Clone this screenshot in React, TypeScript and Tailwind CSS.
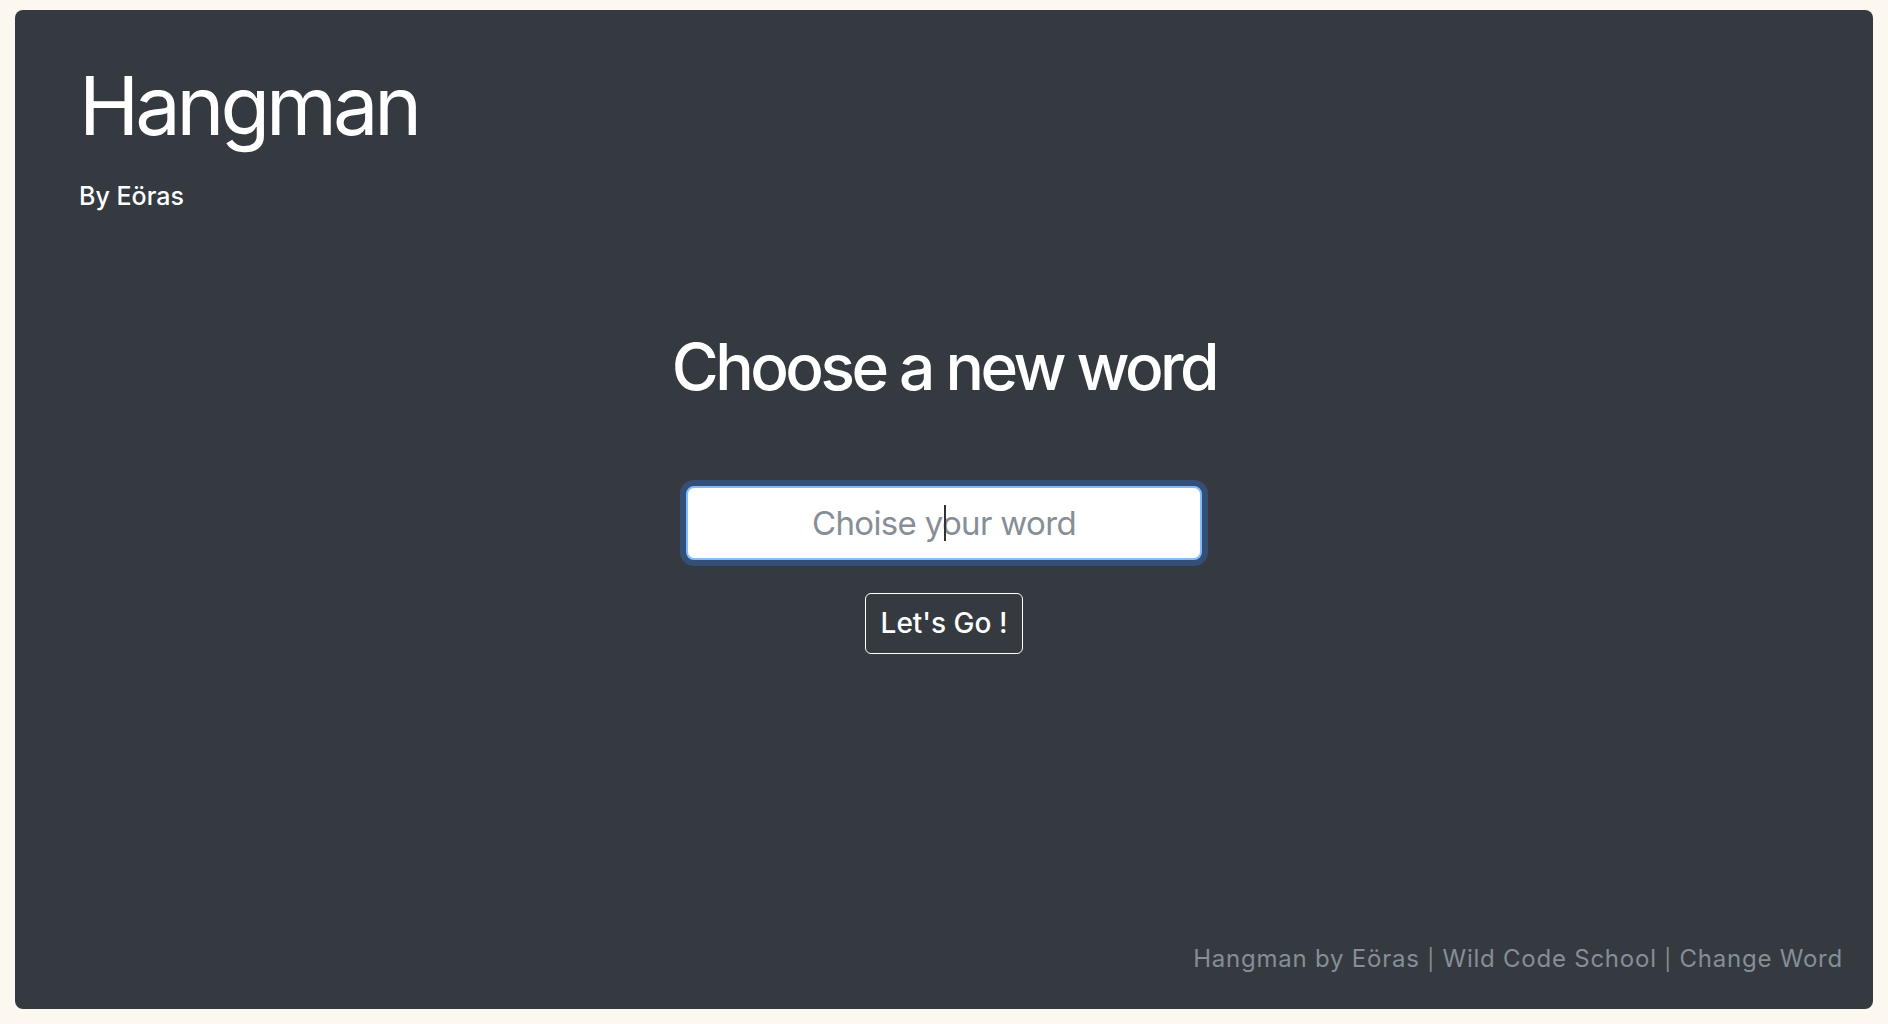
import React from "react";

export default function App() {
  return (
    <div
      className="min-h-screen bg-[#fdf8ef] pt-[10px] px-[15px] pb-[15px]"
      style={{ fontFamily: "Inter, 'Noto Sans', 'Liberation Sans', sans-serif" }}
    >
      <div className="flex h-[999px] flex-col rounded-[8px] bg-[#343a40] text-white">
        <header className="pl-[64px] pt-[48px]">
          <h1 className="text-[81px] leading-[1.2] font-normal tracking-[-0.05em]">Hangman</h1>
          <p className="mt-[23px] text-[25px] leading-[1.44] font-medium">By Eöras</p>
        </header>

        <main className="mt-[115px] flex flex-col items-center">
          <h2 className="text-[64px] leading-[1.2] font-medium tracking-[-0.055em]">Choose a new word</h2>
          <div className="relative mt-[80px]">
            <input
              type="text"
              placeholder="Choise your word"
              className="h-[74px] w-[516px] rounded-[8px] border-2 border-[#80bdff] bg-white text-center text-[33px] tracking-[-0.02em] text-[#495057] shadow-[0_0_0_6px_#344f75] outline-none placeholder:text-[#868e96]"
            />
            <span className="pointer-events-none absolute left-[258px] top-[19px] h-[36px] w-[2px] bg-[#333]" />
          </div>
          <button
            type="button"
            className="mt-[33px] h-[61px] w-[158px] rounded-[6px] border-[1.5px] border-white bg-transparent text-[28px] font-medium text-white"
          >
            Let's Go !
          </button>
        </main>

        <footer className="mt-auto pb-[32px] pr-[30px] text-right text-[24px] leading-[1.44] tracking-[0.032em] text-[#868e96]">
          Hangman by Eöras <span className="text-[21px]">|</span> Wild Code School{" "}
          <span className="text-[21px]">|</span> Change Word
        </footer>
      </div>
    </div>
  );
}
